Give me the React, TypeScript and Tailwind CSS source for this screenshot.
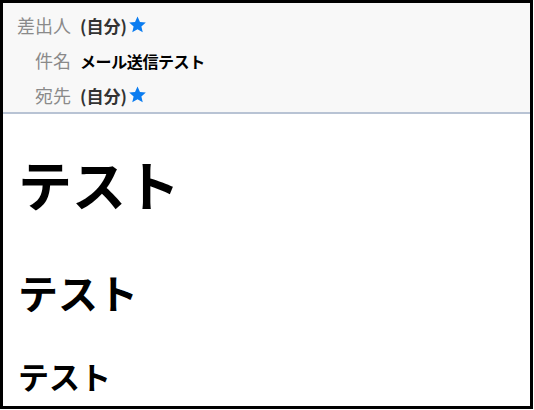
import type { ReactNode } from 'react';

function Star() {
  return (
    <svg viewBox="0 0 24 24" className="w-[19px] h-[19px] ml-[1px] mb-[2px] fill-[#0a7cf0]">
      <path d="M12 1.8l3.1 6.9 7.4.7-5.6 5 1.7 7.4L12 18l-6.6 3.8 1.7-7.4-5.6-5 7.4-.7z" />
    </svg>
  );
}

function Row({ label, children }: { label: string; children: ReactNode }) {
  return (
    <div className="flex items-center h-[35px]">
      <div className="w-[68px] text-right text-[18px] text-[#8a8a8a]">{label}</div>
      <div className="ml-[9px] flex items-center text-[17px]">{children}</div>
    </div>
  );
}

export default function App() {
  return (
    <div className="w-[533px] h-[409px] border-[3px] border-black bg-white overflow-hidden font-['Noto_Sans_CJK_JP',sans-serif]">
      <div className="bg-[#f8f8f8] border-b-2 border-[#b8c3d4] pt-[5px] h-[111px]">
        <Row label="差出人">
          <span className="font-semibold text-[#333]">(自分)</span>
          <Star />
        </Row>
        <Row label="件名">
          <span className="font-bold text-black text-[16px] tracking-[-0.4px]">メール送信テスト</span>
        </Row>
        <Row label="宛先">
          <span className="font-semibold text-[#333]">(自分)</span>
          <Star />
        </Row>
      </div>
      <div className="pl-[15px] text-black">
        <h1 className="text-[54px] font-bold leading-[1.2] mt-[38px]">テスト</h1>
        <h2 className="text-[40px] font-bold leading-[1.2] mt-[51px]">テスト</h2>
        <h3 className="text-[31px] font-bold leading-[1.2] mt-[41px]">テスト</h3>
      </div>
    </div>
  );
}
